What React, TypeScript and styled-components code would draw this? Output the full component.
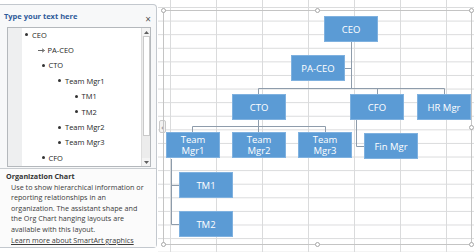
import React from "react";
import styled, { createGlobalStyle } from "styled-components";

const GlobalStyle = createGlobalStyle`
  html, body {
    margin: 0;
    padding: 0;
    background: #ffffff;
  }
  body {
    width: 474px;
    height: 252px;
    overflow: hidden;
    font-family: "Open Sans", "Noto Sans", sans-serif;
  }
`;

interface OutlineEntry {
  label: string;
  level: number;
  assistant?: boolean;
}

const outline: OutlineEntry[] = [
  { label: "CEO", level: 0 },
  { label: "PA-CEO", level: 1, assistant: true },
  { label: "CTO", level: 1 },
  { label: "Team Mgr1", level: 2 },
  { label: "TM1", level: 3 },
  { label: "TM2", level: 3 },
  { label: "Team Mgr2", level: 2 },
  { label: "Team Mgr3", level: 2 },
  { label: "CFO", level: 1 },
];

const infoLines = [
  "Use to show hierarchical information or",
  "reporting relationships in an",
  "organization. The assistant shape and",
  "the Org Chart hanging layouts are",
  "available with this layout.",
];

interface OrgNode {
  label: string;
  x: number;
  y: number;
}

// positions inside the SmartArt frame
const nodes: OrgNode[] = [
  { label: "CEO", x: 160, y: 5 },
  { label: "PA-CEO", x: 127, y: 44 },
  { label: "CTO", x: 68, y: 83 },
  { label: "CFO", x: 186, y: 83 },
  { label: "HR Mgr", x: 253, y: 83 },
  { label: "Team\nMgr1", x: 2, y: 121 },
  { label: "Team\nMgr2", x: 68, y: 121 },
  { label: "Team\nMgr3", x: 134, y: 121 },
  { label: "Fin Mgr", x: 200, y: 122 },
  { label: "TM1", x: 15, y: 161 },
  { label: "TM2", x: 15, y: 200 },
];

const connectors = [
  "M187.5 31 V77.5",
  "M181 57.5 H187.5",
  "M94.5 77.5 H280.5",
  "M94.5 77.5 V83",
  "M213.5 77.5 V83",
  "M280.5 77.5 V83",
  "M94.5 109 V115.5",
  "M28.5 115.5 H161.5",
  "M28.5 115.5 V121",
  "M94.5 115.5 V121",
  "M161.5 115.5 V121",
  "M192.5 109 V135.5 H200",
  "M7.5 148 V213.5 H15",
  "M7.5 174.5 H15",
];

export default function App() {
  return (
    <>
      <GlobalStyle />
      <Page>
        <PaneColumn>
          <TextPane>
            <PaneHeader>
              <PaneTitle>Type your text here</PaneTitle>
              <CloseButton>×</CloseButton>
            </PaneHeader>
            <TextBox>
              <Gutter />
              <OutlineList>
                {outline.map((item) => (
                  <OutlineItem
                    key={item.label}
                    $level={item.level}
                    $assistant={item.assistant}
                  >
                    {item.assistant ? (
                      <svg width="7" height="5" viewBox="0 0 7 5">
                        <path d="M0 2.5 H5.5" stroke="#555" strokeWidth="0.9" />
                        <path d="M4 0.8 L6.5 2.5 L4 4.2" fill="none" stroke="#555" strokeWidth="0.9" />
                      </svg>
                    ) : (
                      <Bullet />
                    )}
                    {item.label}
                  </OutlineItem>
                ))}
              </OutlineList>
              <ScrollBar>
                <ScrollButton>
                  <svg width="5" height="3" viewBox="0 0 5 3">
                    <path d="M0 3 L2.5 0 L5 3 Z" fill="#606060" />
                  </svg>
                </ScrollButton>
                <ScrollThumb />
                <ScrollTrack />
                <ScrollButton>
                  <svg width="5" height="3" viewBox="0 0 5 3">
                    <path d="M0 0 L2.5 3 L5 0 Z" fill="#606060" />
                  </svg>
                </ScrollButton>
              </ScrollBar>
            </TextBox>
            <InfoBox>
              <InfoTitle>Organization Chart</InfoTitle>
              {infoLines.map((line) => (
                <InfoText key={line}>{line}</InfoText>
              ))}
              <InfoLink>Learn more about SmartArt graphics</InfoLink>
            </InfoBox>
          </TextPane>
        </PaneColumn>
        <Sheet>
          <PaneToggle>‹</PaneToggle>
          <Frame>
            <Handle style={{ left: -3, top: -3 }} />
            <Handle style={{ left: 151, top: -3 }} />
            <Handle style={{ right: -3, top: -3 }} />
            <Handle style={{ right: -3, top: 114 }} />
            <Handle style={{ left: -3, bottom: -3 }} />
            <Handle style={{ left: 151, bottom: -3 }} />
            <Handle style={{ right: -3, bottom: -3 }} />
            <Connectors width="307" height="233" viewBox="0 0 307 233">
              {connectors.map((d) => (
                <path key={d} d={d} fill="none" stroke="#8e9cab" strokeWidth="1" />
              ))}
            </Connectors>
            {nodes.map((n) => (
              <OrgBox key={n.label} $x={n.x} $y={n.y}>
                {n.label}
              </OrgBox>
            ))}
          </Frame>
        </Sheet>
      </Page>
    </>
  );
}

const Page = styled.div`
  display: flex;
  width: 474px;
  height: 252px;
  background: #ffffff;
`;

const PaneColumn = styled.div`
  width: 158px;
  flex-shrink: 0;
  padding-top: 4px;
  box-sizing: border-box;
`;

const TextPane = styled.div`
  display: flex;
  flex-direction: column;
  width: 157px;
  height: 244px;
  box-sizing: border-box;
  background: #f7f8f9;
  border: 1px solid #c3c8ce;
  border-left: none;
  border-radius: 0 4px 4px 0;
`;

const PaneHeader = styled.div`
  display: flex;
  align-items: center;
  justify-content: space-between;
  height: 22px;
  padding: 0 5px 0 4px;
`;

const PaneTitle = styled.span`
  font-size: 7.5px;
  font-weight: 700;
  color: #2f5b9a;
`;

const CloseButton = styled.span`
  font-size: 10px;
  line-height: 1;
  color: #555;
  margin-top: 5px;
`;

const TextBox = styled.div`
  display: flex;
  height: 140px;
  margin: 0 5px 0 7px;
  box-sizing: border-box;
  background: #ffffff;
  border: 1px solid #b4b8bc;
`;

const Gutter = styled.div`
  width: 14px;
  flex-shrink: 0;
  background: #eeeff0;
`;

const OutlineList = styled.div`
  flex: 1;
  margin-top: -1px;
`;

const OutlineItem = styled.div<{ $level: number; $assistant?: boolean }>`
  display: flex;
  align-items: center;
  gap: ${(p) => (p.$assistant ? 3 : 4)}px;
  height: 15.4px;
  padding-left: ${(p) => 3 + p.$level * 16.5 - (p.$assistant ? 4 : 0)}px;
  font-size: 7.5px;
  color: #262626;
  white-space: nowrap;
`;

const Bullet = styled.span`
  width: 3px;
  height: 3px;
  border-radius: 50%;
  background: #333333;
  flex-shrink: 0;
`;

const ScrollBar = styled.div`
  display: flex;
  flex-direction: column;
  width: 8px;
  flex-shrink: 0;
  background: #ececec;
  border-left: 1px solid #dddddd;
`;

const ScrollButton = styled.div`
  display: flex;
  align-items: center;
  justify-content: center;
  height: 8px;
  background: #f4f4f4;
`;

const ScrollThumb = styled.div`
  height: 100px;
  margin: 0 0.5px;
  box-sizing: border-box;
  background: #ffffff;
  border: 1px solid #c9c9c9;
`;

const ScrollTrack = styled.div`
  flex: 1;
`;

const InfoBox = styled.div`
  flex: 1;
  margin-top: 1px;
  padding: 2px 6px 0 6px;
  border-top: 1px solid #c8ccd0;
  background: #fbfbfb;
  color: #333333;
`;

const InfoTitle = styled.div`
  font-size: 7.2px;
  font-weight: 700;
  line-height: 11px;
  color: #333333;
`;

const InfoText = styled.div`
  font-size: 7.2px;
  line-height: 10.4px;
  padding-left: 5px;
  color: #3c3c3c;
  white-space: nowrap;
`;

const InfoLink = styled.div`
  margin-top: 1px;
  padding-left: 5px;
  font-size: 7.2px;
  line-height: 10.5px;
  color: #3c3c3c;
  text-decoration: underline;
  white-space: nowrap;
`;

const Sheet = styled.div`
  position: relative;
  flex: 1;
  height: 252px;
  background-color: #ffffff;
  background-image: linear-gradient(to right, #dadbdc 1px, transparent 1px),
    linear-gradient(to bottom, #dadbdc 1px, transparent 1px);
  background-size: 46px 13.6px;
  background-position: 12px 7px;
`;

const PaneToggle = styled.div`
  position: absolute;
  left: 1px;
  top: 120px;
  width: 5px;
  height: 11px;
  display: flex;
  align-items: center;
  justify-content: center;
  font-size: 8px;
  color: #666;
  background: #f2f2f2;
  border: 1px solid #c9c9c9;
  border-radius: 2px;
`;

const Frame = styled.div`
  position: absolute;
  left: 5px;
  top: 10px;
  width: 309px;
  height: 235px;
  box-sizing: border-box;
  border: 1px solid #c4c4c4;
`;

const Handle = styled.span`
  position: absolute;
  width: 5px;
  height: 5px;
  box-sizing: border-box;
  border-radius: 50%;
  background: #ffffff;
  border: 1px solid #a8a8a8;
`;

const Connectors = styled.svg`
  position: absolute;
  left: 0;
  top: 0;
`;

const OrgBox = styled.div<{ $x: number; $y: number }>`
  position: absolute;
  left: ${(p) => p.$x}px;
  top: ${(p) => p.$y}px;
  width: 54px;
  height: 26px;
  box-sizing: border-box;
  display: flex;
  align-items: center;
  justify-content: center;
  text-align: center;
  white-space: pre-line;
  background: #5b9bd5;
  border: 1px solid #7fb1df;
  color: #ffffff;
  font-family: "Open Sans", "Noto Sans", sans-serif;
  font-size: 9.5px;
  line-height: 11px;
`;
